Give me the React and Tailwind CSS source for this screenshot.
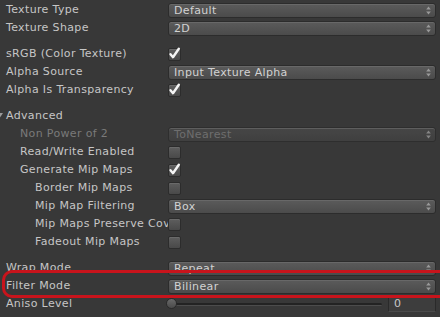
const Arrows = () => (
  <svg width="5" height="9" viewBox="0 0 5 9" className="shrink-0">
    <path d="M2.5 0.5 L4.8 3.6 L0.2 3.6 Z" fill="#9a9a9a" />
    <path d="M2.5 8.5 L4.8 5.4 L0.2 5.4 Z" fill="#9a9a9a" />
  </svg>
);

const Dropdown = ({ value, disabled }) => (
  <div
    className={`flex h-[15px] w-full items-center justify-between rounded-[3px] border border-[#2c2c2c] pl-[5px] pr-[4px] shadow-[inset_0_1px_0_#686868] ${
      disabled
        ? "bg-gradient-to-b from-[#4a4a4a] to-[#424242] text-[#7c7c7c] opacity-80"
        : "bg-gradient-to-b from-[#5b5b5b] to-[#4b4b4b] text-[#d2d2d2]"
    }`}
  >
    <span className="leading-none">{value}</span>
    <Arrows />
  </div>
);

const Checkbox = ({ checked }) => (
  <div className="relative h-[13px] w-[13px] rounded-[2px] border border-[#2c2c2c] bg-gradient-to-b from-[#5e5e5e] to-[#494949] shadow-[inset_0_1px_0_#6a6a6a]">
    {checked && (
      <svg width="13" height="13" viewBox="0 0 13 13" className="absolute left-[-1px] top-[-2px]">
        <path d="M2.5 7.2 L5 10.2 L10.8 1.8" fill="none" stroke="#f4f4f4" strokeWidth="2.4" strokeLinecap="round" strokeLinejoin="round" />
      </svg>
    )}
  </div>
);

const Row = ({ label, indent = 0, dim, children }) => (
  <div className="flex h-[18px] items-center">
    <div
      className={`w-[168px] shrink-0 whitespace-nowrap ${dim ? "text-[#7a7a7a]" : "text-[#c6c6c6]"} ${
        indent === 0 ? "pl-[6px]" : indent === 1 ? "pl-[20px]" : "pl-[35px]"
      }`}
    >
      {label}
    </div>
    <div className="flex flex-1 items-center pr-[4px]">{children}</div>
  </div>
);

const Slider = () => (
  <div className="flex w-full items-center">
    <div className="relative ml-[2px] flex-1">
      <div className="h-[3px] w-full rounded-full border-b border-[#4c4c4c] bg-[#232323]" />
      <div className="absolute left-[-4px] top-[-5px] h-[11px] w-[11px] rounded-full border border-[#2a2a2a] bg-gradient-to-b from-[#6a6a6a] to-[#4a4a4a]" />
    </div>
    <div className="ml-[6px] flex h-[15px] w-[48px] items-center border border-[#2a2a2a] border-b-[#4a4a4a] bg-[#3d3d3d] pl-[5px] text-[#c8c8c8]">
      0
    </div>
  </div>
);

const App = () => {
  return (
    <div
      className="relative h-[317px] w-[440px] overflow-hidden bg-[#383838] pt-[1px] text-[11px] tracking-[0.35px]"
      style={{ fontFamily: '"DejaVu Sans", Verdana, sans-serif' }}
    >
      <Row label="Texture Type"><Dropdown value="Default" /></Row>
      <Row label="Texture Shape"><Dropdown value="2D" /></Row>

      <div className="h-[8px]" />
      <Row label="sRGB (Color Texture)"><Checkbox checked /></Row>
      <Row label="Alpha Source"><Dropdown value="Input Texture Alpha" /></Row>
      <Row label="Alpha Is Transparency"><Checkbox checked /></Row>

      <div className="h-[8px]" />
      <div className="relative">
        <svg width="8" height="8" viewBox="0 0 8 8" className="absolute left-[-5px] top-[5px]">
          <path d="M0 1 L8 1 L4 7 Z" fill="#9a9a9a" />
        </svg>
        <Row label="Advanced" />
      </div>
      <Row label="Non Power of 2" indent={1} dim><Dropdown value="ToNearest" disabled /></Row>
      <Row label="Read/Write Enabled" indent={1}><Checkbox /></Row>
      <Row label="Generate Mip Maps" indent={1}><Checkbox checked /></Row>
      <Row label="Border Mip Maps" indent={2}><Checkbox /></Row>
      <Row label="Mip Map Filtering" indent={2}><Dropdown value="Box" /></Row>
      <Row label="Mip Maps Preserve Cov" indent={2}><Checkbox /></Row>
      <Row label="Fadeout Mip Maps" indent={2}><Checkbox /></Row>

      <div className="h-[8px]" />
      <Row label="Wrap Mode"><Dropdown value="Repeat" /></Row>
      <Row label="Filter Mode"><Dropdown value="Bilinear" /></Row>
      <Row label="Aniso Level"><Slider /></Row>

      {/* red highlight around Filter Mode */}
      <div className="pointer-events-none absolute left-[2px] top-[270px] h-[28px] w-[460px] rounded-[10px] border-[3px] border-[#c8141c]" />
    </div>
  );
};

export default App;
